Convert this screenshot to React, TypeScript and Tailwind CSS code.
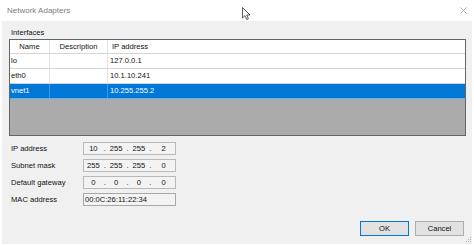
const ROWS = [
  { name: 'lo', desc: '', ip: '127.0.0.1' },
  { name: 'eth0', desc: '', ip: '10.1.10.241' },
  { name: 'vnet1', desc: '', ip: '10.255.255.2', selected: true },
]

const FIELDS: { label: string; octets?: string[]; text?: string }[] = [
  { label: 'IP address', octets: ['10', '255', '255', '2'] },
  { label: 'Subnet mask', octets: ['255', '255', '255', '0'] },
  { label: 'Default gateway', octets: ['0', '0', '0', '0'] },
  { label: 'MAC address', text: '00:0C:26:11:22:34' },
]

function IpBox({ octets }: { octets: string[] }) {
  return (
    <div className="flex h-[13px] w-[93px] items-center border border-[#b9b9b9] bg-[#f3f3f3]">
      {octets.map((o, i) => (
        <div key={i} className="flex flex-1 items-center">
          <span className="flex-1 text-center">{o}</span>
          {i < 3 && <span className="w-[4px] text-center">.</span>}
        </div>
      ))}
    </div>
  )
}

export default function App() {
  return (
    <div
      className="relative flex h-[245px] w-[474px] flex-col bg-white text-[7.6px] text-[#111]"
      style={{ fontFamily: '"Liberation Sans", Arial, sans-serif' }}
    >
      {/* Title bar */}
      <div className="flex h-[21px] items-center justify-between pl-[7px] pr-[7px]">
        <span className="text-[8px] text-[#7d7d7d]">Network Adapters</span>
        <svg width="7" height="7" viewBox="0 0 7 7" className="stroke-[#9a9a9a]">
          <path d="M0.5 0.5 L6.5 6.5 M6.5 0.5 L0.5 6.5" strokeWidth="0.8" />
        </svg>
      </div>

      {/* Body */}
      <div className="mx-[2px] mb-[1px] flex flex-1 flex-col bg-[#f0f0f0] pl-[7px] pr-[8px] pt-[5px]">
        <div className="h-[13px] pl-[2px] leading-[13px]">Interfaces</div>

        {/* Table */}
        <div className="flex h-[97px] w-[457px] flex-col border border-[#646464] bg-[#ababab]">
          <div className="flex h-[14px] shrink-0 border-b border-[#d5d5d5] bg-white">
            <div className="w-[40px] border-r border-[#e3e3e3] text-center leading-[13px]">Name</div>
            <div className="w-[58px] border-r border-[#e3e3e3] text-center leading-[13px]">Description</div>
            <div className="flex-1 pl-[4px] leading-[13px]">IP address</div>
          </div>
          {ROWS.map((r) => (
            <div
              key={r.name}
              className={
                r.selected
                  ? 'flex h-[15px] shrink-0 border-b border-[#66b0e8] bg-[#0078d7] text-white'
                  : 'flex h-[15px] shrink-0 border-b border-[#d5d5d5] bg-white'
              }
            >
              <div
                className={
                  r.selected
                    ? 'w-[40px] border-r border-[#3d98e0] pl-[1px] leading-[14px]'
                    : 'w-[40px] border-r border-[#e3e3e3] pl-[1px] leading-[14px]'
                }
              >
                {r.name}
              </div>
              <div
                className={
                  r.selected
                    ? 'w-[58px] border-r border-[#3d98e0] leading-[14px]'
                    : 'w-[58px] border-r border-[#e3e3e3] leading-[14px]'
                }
              >
                {r.desc}
              </div>
              <div className="flex-1 pl-[2px] leading-[14px]">{r.ip}</div>
            </div>
          ))}
        </div>

        {/* Fields */}
        <div className="mt-[4px] flex flex-col pl-[2px]">
          {FIELDS.map((f) => (
            <div key={f.label} className="flex h-[17px] items-center">
              <span className="w-[72px]">{f.label}</span>
              {f.octets ? (
                <IpBox octets={f.octets} />
              ) : (
                <div className="flex h-[13px] w-[93px] items-center border border-[#a8a8a8] bg-[#f3f3f3] pl-[1px]">
                  {f.text}
                </div>
              )}
            </div>
          ))}
        </div>

        {/* Buttons */}
        <div className="mt-auto mb-[8px] flex justify-end gap-[6px]">
          <button className="h-[15px] w-[49px] border border-[#0078d7] bg-[#e1e1e1] text-[7.6px]">OK</button>
          <button className="h-[15px] w-[49px] border border-[#adadad] bg-[#e1e1e1] text-[7.6px]">Cancel</button>
        </div>
      </div>

      {/* Resize grip */}
      <svg width="6" height="6" viewBox="0 0 6 6" className="absolute bottom-[2px] right-[2px] fill-[#b8b8b8]">
        <rect x="4" y="0" width="1" height="1" />
        <rect x="2" y="2" width="1" height="1" />
        <rect x="4" y="2" width="1" height="1" />
        <rect x="0" y="4" width="1" height="1" />
        <rect x="2" y="4" width="1" height="1" />
        <rect x="4" y="4" width="1" height="1" />
      </svg>

      {/* Mouse cursor */}
      <svg width="10" height="15" viewBox="0 0 10 15" className="absolute left-[242px] top-[7px]">
        <path d="M0.5 0.5 L0.5 11 L3 8.6 L4.8 12.6 L6.4 11.9 L4.7 8 L8 8 Z" fill="white" stroke="#333" strokeWidth="0.8" strokeLinejoin="round" />
      </svg>
    </div>
  )
}
